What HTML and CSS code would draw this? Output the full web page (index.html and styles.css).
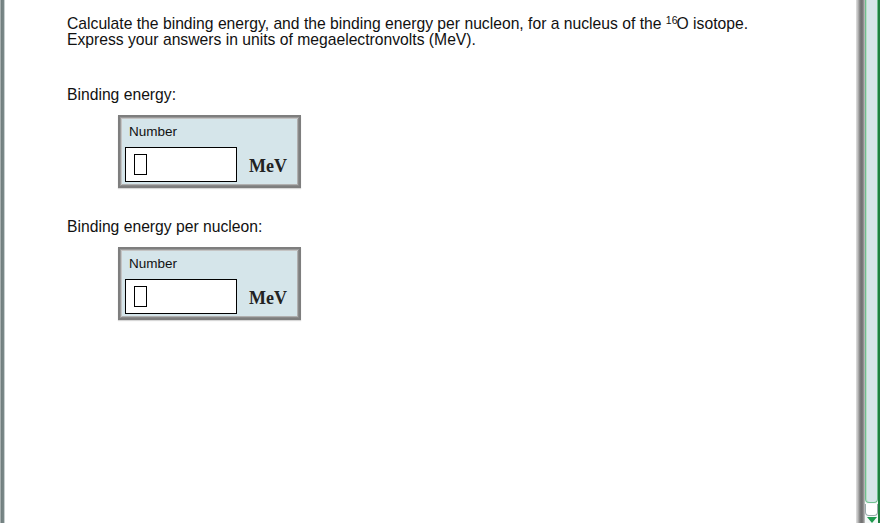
FILE: index.html
```html
<!DOCTYPE html>
<html>
<head>
<meta charset="utf-8">
<link rel="stylesheet" href="styles.css">
</head>
<body>
<div class="page">
  <div class="leftbar"></div>
  <main class="main">
    <p class="question">Calculate the binding energy, and the binding energy per nucleon, for a nucleus of the <sup>16</sup>O isotope.<br>Express your answers in units of megaelectronvolts (MeV).</p>

    <p class="label first">Binding energy:</p>
    <div class="answer">
      <div class="answer-title">Number</div>
      <div class="answer-row">
        <div class="input"><span class="caret"></span></div>
        <span class="unit">MeV</span>
      </div>
    </div>

    <p class="label second">Binding energy per nucleon:</p>
    <div class="answer">
      <div class="answer-title">Number</div>
      <div class="answer-row">
        <div class="input"><span class="caret"></span></div>
        <span class="unit">MeV</span>
      </div>
    </div>
  </main>
  <div class="rightframe">
    <div class="greyband"></div>
    <div class="scroll">
      <div class="thumb"></div>
      <div class="track-end"></div>
      <div class="arrow"></div>
    </div>
    <div class="greenline"></div>
  </div>
</div>
</body>
</html>
```

FILE: styles.css
```css
html, body {
  margin: 0;
  padding: 0;
  background: #ffffff;
}
.page {
  display: flex;
  width: 880px;
  height: 523px;
  overflow: hidden;
  font-family: "Liberation Sans", Arial, sans-serif;
  color: #111;
}
.leftbar {
  width: 5px;
  flex: none;
  background: linear-gradient(to right, #a7b0b0 0, #a7b0b0 1px, #6f7d7d 1px, #7c8a8a 4px, #c9d0d0 4px, #c9d0d0 5px);
}
.main {
  flex: 1;
  padding-left: 62px;
  padding-top: 16px;
}
.question {
  margin: 0;
  font-size: 15.7px;
  line-height: 16px;
}
.question sup {
  font-size: 10.5px;
  line-height: 0;
  vertical-align: 5px;
  margin-right: -1px;
}
.label {
  margin: 0;
  font-size: 15.7px;
  line-height: 18px;
}
.label.first {
  margin-top: 38px;
}
.label.second {
  margin-top: 30px;
}
.answer {
  margin-left: 51px;
  margin-top: 11px;
  width: 173px;
  box-sizing: content-box;
  background: #d5e5ea;
  border: 2px solid #7e7e7e;
  box-shadow: inset 1px 1px 0 #9a9a9a, inset -1px -1px 0 #8a8a8a, inset 2px 2px 0 #c4c4c4, inset -2px -2px 0 #b0b0b0, 0 1px 1px #d8d8d8;
  padding: 7px 1px 4px 5px;
}
.answer-title {
  font-size: 13.5px;
  line-height: 16px;
  padding-left: 4px;
  color: #111;
}
.answer-row {
  display: flex;
  align-items: center;
  margin-top: 7px;
}
.input {
  background: #fff;
  border: 1px solid #000;
  display: flex;
  align-items: center;
  padding-left: 8px;
  box-sizing: border-box;
  width: 112px;
  height: 35px;
}
.caret {
  display: block;
  width: 13px;
  height: 21px;
  border: 1px solid #000;
  box-sizing: border-box;
}
.unit {
  font-family: "Liberation Serif", "Times New Roman", serif;
  font-weight: bold;
  font-size: 18px;
  margin-left: 12px;
  margin-top: 4px;
  color: #222;
}
.rightframe {
  width: 24px;
  flex: none;
  display: flex;
}
.greyband {
  width: 9px;
  background: linear-gradient(to right, #e2e2e2 0, #b8b8b8 2px, #7f7f7f 4px, #6e6e6e 6px, #9c9c9c 8px, #cfcfcf 9px);
}
.scroll {
  width: 13px;
  display: flex;
  flex-direction: column;
  background: #f4f8f8;
}
.thumb {
  flex: 1;
  background: #d6e5e8;
  border: 1px solid #6fc08e;
  border-top: none;
  border-radius: 0 0 4px 4px;
  box-shadow: inset 1px 0 0 #b9dcc6;
}
.track-end {
  height: 11px;
  margin: 1px 0 1px 0;
  background: #fff;
  border: 1px solid #9aa;
  border-radius: 0 0 4px 4px;
  border-top: none;
}
.arrow {
  height: 6px;
  display: flex;
  justify-content: center;
}
.arrow::before {
  content: "";
  display: block;
  width: 0;
  height: 0;
  border-left: 5px solid transparent;
  border-right: 5px solid transparent;
  border-top: 6px solid #1f9a4e;
}
.greenline {
  width: 2px;
  background: #1f7f3f;
}
```
